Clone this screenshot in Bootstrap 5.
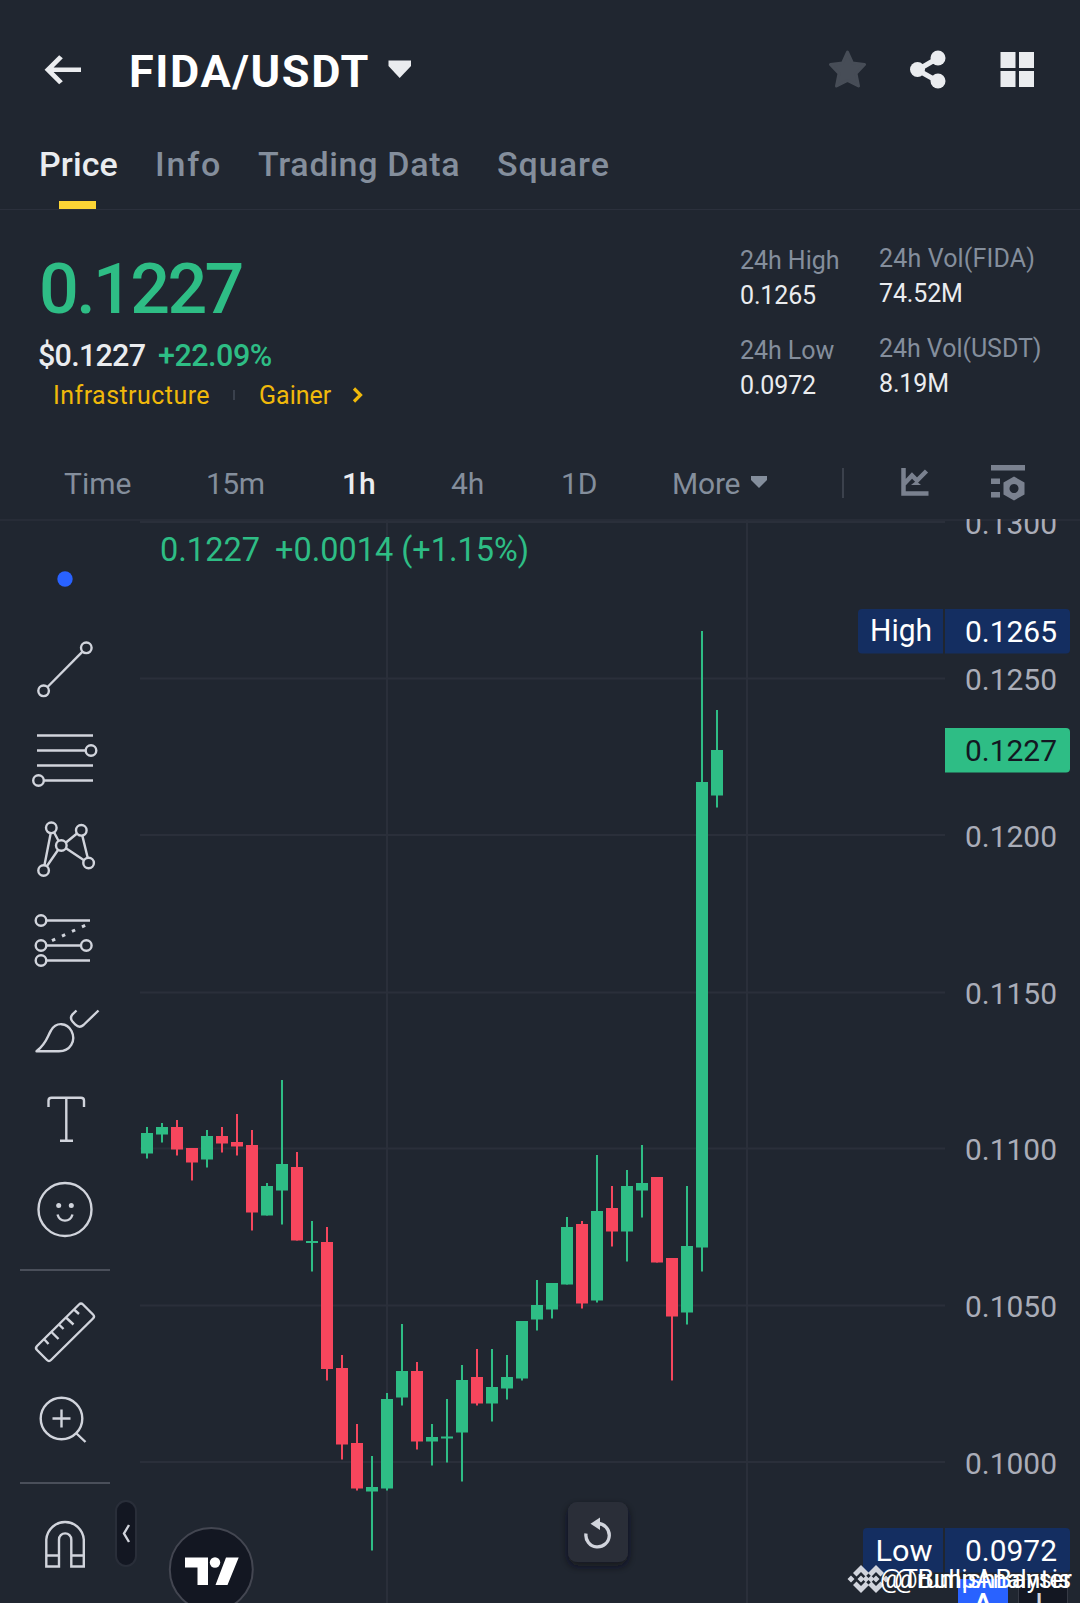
<!DOCTYPE html>
<html lang="en">
<head>
<meta charset="utf-8">
<meta name="viewport" content="width=device-width, initial-scale=1">
<title>FIDA/USDT</title>
<link href="https://cdn.jsdelivr.net/npm/bootstrap@5.3.0/dist/css/bootstrap.min.css" rel="stylesheet">
<style>
body{background:#202630;color:#eaecef;font-family:Roboto,"Liberation Sans",sans-serif;width:1080px;height:1603px;overflow:hidden;line-height:1}
svg{display:block;flex:none}
.topbar{height:140px;padding:0 45px 2px 44px}
.pair{font-size:45px;font-weight:700;color:#fff;letter-spacing:1.6px;width:239px;margin-left:47px;margin-top:5px;white-space:nowrap}
.tabbar{height:70px;padding-left:39px;border-bottom:1px solid #2b303c}
.tabbar .tab{font-size:34px;font-weight:500;letter-spacing:.7px;color:#848e9c;background:none;border:0;padding:0 0 22px;height:70px;text-align:left;white-space:nowrap;position:relative;display:block}
.tabbar .active{color:#eaecef;letter-spacing:.1px}
.tabbar .active::after{content:"";position:absolute;left:20px;bottom:1px;width:37px;height:8px;background:#fcd535}
.ticker{height:235px}
.up{color:#2ebd85}
.bigprice{font-size:70px;font-weight:500;letter-spacing:-2.6px;padding:44px 0 0 39px;height:121px}
.sub{font-size:30.5px;font-weight:500;padding-left:38px;height:50px;align-items:center;letter-spacing:-.75px}
.sub .up{letter-spacing:-.5px}
.tags{font-size:25px;color:#f0b90b;padding-left:53px;height:28px;align-items:center}
.stats{width:340px;font-size:25px;padding-top:36px}
.stats .c1{width:139px;padding-top:2px}
.stats dt{font-weight:400;color:#848e9c;height:35px;white-space:nowrap;letter-spacing:-.05px}
.stats dd{height:55px;margin:0;letter-spacing:-.15px}
.frames{height:74px;padding:1px 0 0 64px;font-size:30px;color:#848e9c}
.frames span{flex:none;white-space:nowrap;padding-top:3px}
.frames b{font-weight:500;color:#eaecef}
.tools{width:140px;padding-top:12.5px;position:relative;border-top:2px solid #272c37}
.tools hr{width:90px;margin:15.5px 0 15.5px 20px;border-top:2px solid #4a4f5a;opacity:1}
.tools svg{fill:none;stroke:#d1d4dc;stroke-width:2.4}
.fold{position:absolute;left:115px;top:979px;width:22px;height:67px;border:2px solid #292e39;background:#131722;border-radius:11px}
</style>
<script src="https://cdn.jsdelivr.net/npm/bootstrap@5.3.0/dist/js/bootstrap.bundle.min.js"></script>
</head>
<body class="d-flex flex-column">
<header class="topbar d-flex align-items-center flex-shrink-0">
  <svg width="38" height="34" viewBox="0 0 38 34" fill="none" stroke="#eaecef" stroke-width="5"><path d="M17 4 4 18 17 32M4 18H37" transform="translate(0 1) scale(1 .93)"/></svg>
  <div class="pair">FIDA/USDT</div>
  <svg class="ms-3" width="30" height="20" viewBox="0 0 30 20" fill="#eaecef"><path d="M4.500 1.500H27V7L15.700 19 4.500 7Z"/></svg>
  <div class="d-flex align-items-center ms-auto">
    <svg width="40" height="42" viewBox="0 0 40 42"><path d="M18.500 4 23.500 15 35.500 16.500 27 25.500 29.500 38 18.500 32.500 7.500 38 10 25.500 1.500 16.500 13.500 15Z" fill="#474d57" stroke="#474d57" stroke-width="3" stroke-linejoin="round"/></svg>
    <svg style="margin-left:40px" width="38" height="42" viewBox="0 0 38 42" fill="#eaecef"><path d="M29 10 8.500 22 29 33.500" fill="none" stroke="#eaecef" stroke-width="5"/><circle cx="29" cy="10" r="7.500"/><circle cx="8.500" cy="21.500" r="7.500"/><circle cx="29" cy="33" r="7.500"/></svg>
    <svg style="margin-left:53px" width="35" height="36" viewBox="0 0 35 36" fill="#eaecef"><path d="M.5 1h15v16H.5zM19 1h15v16H19zM.5 20h15v16H.5zM19 20h15v16H19z"/></svg>
  </div>
</header>
<nav class="tabbar d-flex flex-shrink-0">
  <button class="tab active" style="width:116px">Price</button>
  <button class="tab" style="width:103px;letter-spacing:1.8px">Info</button>
  <button class="tab" style="width:239px">Trading Data</button>
  <button class="tab" style="letter-spacing:1px">Square</button>
</nav>
<section class="ticker d-flex justify-content-between flex-shrink-0">
  <div>
    <div class="bigprice up">0.1227</div>
    <div class="sub d-flex"><span style="width:120px">$0.1227</span><span class="up">+22.09%</span></div>
    <div class="tags d-flex"><span style="width:180px;letter-spacing:.45px">Infrastructure</span><i style="width:2px;height:10px;background:#3a414d;margin-right:24px"></i><span style="width:92px">Gainer</span><svg width="14" height="16" viewBox="0 0 14 16" fill="none" stroke="#f0b90b" stroke-width="3.200"><path d="M3 1.500 9.500 8 3 14.500"/></svg></div>
  </div>
  <div class="stats d-flex">
    <dl class="c1 m-0"><dt>24h High</dt><dd>0.1265</dd><dt>24h Low</dt><dd>0.0972</dd></dl>
    <dl class="m-0"><dt style="letter-spacing:.15px">24h Vol(FIDA)</dt><dd>74.52M</dd><dt>24h Vol(USDT)</dt><dd>8.19M</dd></dl>
  </div>
</section>
<nav class="frames d-flex align-items-center flex-shrink-0">
  <span style="width:142px">Time</span><span style="width:136px;letter-spacing:-.5px">15m</span><span style="width:109px"><b>1h</b></span><span style="width:110px">4h</span><span style="width:111px">1D</span><span style="width:78px;letter-spacing:-.2px">More</span>
  <svg width="18" height="14" viewBox="0 0 18 14" fill="#848e9c"><path d="M1 0H17V4L9 12 1 4Z"/></svg>
  <i style="width:2px;height:30px;background:#3b414c;margin-left:74px"></i>
  <svg style="margin-left:56px" width="30" height="32" viewBox="0 0 30 32" fill="none" stroke="#7a818f" stroke-width="4.500"><path d="M3.500 1V26.500H28.500M4 17 12 8.500 17 13.500 26.500 4"/><path d="M16 14 21 18H11Z" fill="#7a818f" stroke="none"/></svg>
  <svg style="margin-left:60px" width="36" height="40" viewBox="0 0 36 40" fill="#7a818f"><path d="M1 2h34v5.500H1zM1 15.500h9V21H1zM1 29h9v5.500H1z"/><path fill-rule="evenodd" d="M24 13.500 34.500 19.500V31.500L24 37.500 13.500 31.500V19.500ZM24 21a4.500 4.500 0 1 0 .01 0Z"/></svg>
</nav>
<main class="d-flex flex-shrink-0">
  <aside class="tools">
    <svg width="130" height="90" viewBox="0 0 130 90"><circle cx="65" cy="45" r="7.700" fill="#2962ff" stroke="none"/></svg>
    <svg width="130" height="90" viewBox="0 0 130 90"><circle cx="86.300" cy="23.800" r="5.300"/><circle cx="43.600" cy="66.800" r="5.300"/><path d="M47.500 63 82.500 27.600"/></svg>
    <svg width="130" height="90" viewBox="0 0 130 90"><path d="M37 21.500H93M37 36.500H85.500M37 51.500H93M44 66.500H93"/><circle cx="91" cy="36.500" r="5.300"/><circle cx="38.500" cy="66.500" r="5.300"/></svg>
    <svg width="130" height="90" viewBox="0 0 130 90"><circle cx="51.300" cy="23.800" r="5.300"/><circle cx="81.300" cy="26.300" r="5.300"/><circle cx="61.300" cy="41.500" r="5.300"/><circle cx="43.600" cy="66.500" r="5.300"/><circle cx="88.600" cy="59" r="5.300"/><path d="M50.700 29.200 44.500 61M54 28.300 58.600 37M66 38.500 77 29.500M58 46 46.800 62.200M66 44.300 84 56.200M82.300 31.600 87.700 53.800"/></svg>
    <svg width="130" height="90" viewBox="0 0 130 90"><circle cx="41" cy="26.500" r="5.300"/><circle cx="41" cy="51.500" r="5.300"/><circle cx="86.300" cy="51.500" r="5.300"/><circle cx="41" cy="66.500" r="5.300"/><path d="M46 26.500H90M46 51.500H81M46 66.500H90"/><path d="M52 46.700 86 31" stroke-width="3" stroke-dasharray="3.500 7.500"/></svg>
    <svg width="130" height="90" viewBox="0 0 130 90" stroke-linejoin="round"><path d="M36.500 67.300C47 59 47 53 51 46.500 56 37.500 67 38.500 71.500 47 76.500 57 70 67.300 59 67.300Z"/><path d="M76.500 26.500 72.500 30.300Q69.500 34 72.500 37.500L75.500 40.700Q79.500 44.500 83.500 41L98.500 26.500"/></svg>
    <svg width="130" height="90" viewBox="0 0 130 90"><path d="M48.500 33V26.500Q48.500 23.800 51.500 23.800H81Q84 23.800 84 26.500V33M66.300 23.800V66.800M60 66.800H73"/></svg>
    <svg width="130" height="90" viewBox="0 0 130 90"><circle cx="65" cy="45.500" r="26.500"/><circle cx="58.700" cy="41.500" r="2.500" fill="#d1d4dc" stroke="none"/><circle cx="71.300" cy="41.500" r="2.500" fill="#d1d4dc" stroke="none"/><path d="M57.500 50.500C60 58.700 70 58.700 72.500 50.500"/></svg>
    <hr>
    <svg width="130" height="90" viewBox="0 0 130 90" stroke-linejoin="round"><path d="M37 59 79 17.500Q81 15.500 83 17.500L93 27.500Q95 29.500 93 31.500L51 73Q49 75 47 73L37 63Q35 61 37 59ZM44 52 48.500 57M51.500 45 58.500 52M59 37.500 63.500 42M66 30.500 73.500 37.500M74 22.500 79 27"/></svg>
    <svg width="130" height="90" viewBox="0 0 130 90"><circle cx="61.500" cy="41.500" r="20.800"/><path d="M52.500 41.500H70.500M61.500 32.500V50.500M76 56 85.500 65"/></svg>
    <hr>
    <svg width="130" height="90" viewBox="0 0 130 90"><path d="M46.300 66.500V39.500A18.800 18.800 0 0 1 83.800 39.500V66.500H71.300V39.500A6 6 0 0 0 59 39.500V66.500ZM46.300 55.500H59M71.300 55.500H83.800"/></svg>
    <div class="fold"><svg width="18" height="63" viewBox="0 0 18 63"><path d="M12 23 7 31.500 12 40"/></svg></div>
  </aside>
  <svg id="chart" width="940" height="1084" viewBox="140 519 940 1084" font-family="Roboto, 'Liberation Sans', sans-serif"></svg>
</main>
<script>
// direction, body top, body bottom, wick top, wick bottom (y in chart units)
const candles=[
['u',1133,1153.5,1127,1158.5],['u',1127,1134.5,1123,1142.5],['d',1127,1149.5,1120,1155.5],['d',1148,1162.5,1148,1180.5],
['u',1136,1159.5,1130,1167.5],['d',1136,1143.5,1127,1152.5],['d',1142,1146.5,1114,1155.5],['d',1145,1212.5,1130,1230.5],
['u',1186,1215.5,1183,1215.5],['u',1164,1190.5,1080,1224.5],['d',1167,1240.5,1152,1240.5],['u',1241,1243,1221,1271.5],
['d',1242,1369,1227,1380.5],['d',1368,1444.5,1355,1459.5],['d',1443,1488.5,1424,1490.5],['u',1487,1491.5,1456,1550.5],
['u',1399,1488.5,1393,1490.5],['u',1371,1397.5,1324,1405.5],['d',1371,1441.5,1362,1449.5],['u',1437,1441.5,1424,1465.5],
['u',1436.5,1438.5,1399,1462.5],['u',1380,1432.5,1365,1481.5],['d',1377,1403.5,1349,1405.5],['u',1387,1403.5,1349,1421.5],
['u',1377,1388.5,1355,1399.5],['u',1321,1378.5,1321,1380.5],['u',1305,1319.5,1280,1330.5],['u',1283,1309.5,1283,1318.5],
['u',1227,1284.5,1217,1284.5],['d',1224,1303.5,1221,1308.5],['u',1211,1300.5,1155,1302.5],['d',1208,1231.5,1186,1246.5],
['u',1186,1231.5,1170,1261.5],['u',1183,1190.5,1145,1217.5],['d',1177,1262.5,1177,1262.5],['d',1258,1316.5,1258,1380.5],
['u',1246,1312.5,1186,1324.5],['u',782,1247.5,631,1271.5],['u',750,795.5,710,807.5]];
let s='';
const box=(x,y,w,h,f,e='')=>{s+=`<rect x="${x}" y="${y}" width="${w}" height="${h}" fill="${f}" ${e}/>`};
const label=(x,y,t,f,w,size=30,e='')=>{s+=`<text x="${x}" y="${y}" fill="${f}" font-size="${size}" textLength="${w}" lengthAdjust="spacingAndGlyphs" xml:space="preserve" ${e}>${t}</text>`};
// grid and price axis
box(140,519,940,2,'#272c37');
const grid=[522,678.5,835,992.5,1148.5,1305.5,1462];
grid.forEach((y,i)=>{box(140,y-1,805,2,'#2a2f3a');label(965,y+11.5,(0.13-i*0.005).toFixed(4),'#aaadb8',92)});
box(386,520,2,1083,'#2a2f3a');box(746,520,2,1083,'#2a2f3a');
candles.forEach(([d,a,b,h,l],i)=>{const x=147+15*i,f=d=='u'?'#2ebd85':'#f6465d';box(x-1,h,2,l-h,f);box(x-6,a,12,b-a,f)});
label(160,561,'0.1227','#2ebd85',100,33);
label(275,561,'+0.0014 (+1.15%)','#2ebd85',254,33);
// price tags
const tag=(x,y,f)=>{s+=`<path d="M${x+4} ${y}H943V${y+44.5}H${x+4}Q${x} ${y+44.5} ${x} ${y+40.5}V${y+4}Q${x} ${y} ${x+4} ${y}Z" fill="${f}"/>`};
const val=(y,f)=>{s+=`<path d="M945 ${y}H1066Q1070 ${y} 1070 ${y+4}V${y+40.5}Q1070 ${y+44.5} 1066 ${y+44.5}H945Z" fill="${f}"/>`};
tag(858,609,'#142e61');val(609,'#142e61');label(870,640.5,'High','#fff',62,31);label(965,642,'0.1265','#fff',92);
val(728,'#2ebd85');label(965,761,'0.1227','#131722',92);
tag(863,1528,'#142e61');val(1528,'#142e61');label(875.5,1561,'Low','#fff',57);label(965,1561,'0.0972','#fff',92);
// logo badge
s+='<circle cx="211.300" cy="1569.500" r="41.500" fill="#131722" stroke="#434651" stroke-width="2"/><path d="M185 1557.500H208V1585H197.500V1567.500H185ZM226 1557.500H238.700L227.500 1585H215.500Z" fill="#fff"/><circle cx="215" cy="1562.500" r="5.200" fill="#fff"/>';
// reset button
s+='<defs><filter id="sh" x="-40%" y="-40%" width="180%" height="180%"><feDropShadow dx="0" dy="4" stdDeviation="4" flood-color="#10131b" flood-opacity=".75"/></filter></defs>';
box(568,1502,60,60,'#2a2e39','rx="9" filter="url(#sh)"');
s+='<path d="M586 1533.500A11.700 11.700 0 1 0 597.500 1523.500" fill="none" stroke="#d1d4dc" stroke-width="3.300"/><path d="M600 1517.500V1530L590.500 1523.700Z" fill="#d1d4dc"/>';
// scale mode buttons
box(958,1579,50,30,'#2962ff');box(1018.5,1579.5,49,30,'#131722','stroke="#363a45"');
label(973,1614,'A','#fff',20,30,'font-weight="500"');label(1035,1614,'L','#d1d4dc',17);
// author marks
const mark=x=>{s+=`<g transform="translate(${x} 1579)" fill="#d1d4dc"><path d="M0-14 8-6 4.500-2.500 0-7-4.500-2.500-8-6ZM0 14 8 6 4.500 2.500 0 7-4.500 2.500-8 6ZM0-3.500 3.500 0 0 3.500-3.500 0ZM-10-3.500-6.500 0-10 3.500-13.500 0ZM10-3.500 13.500 0 10 3.500 6.500 0Z"/></g>`};
mark(861);mark(876);
label(880,1587.500,'@TrumpAnalysis','#fff',191,25);
label(894,1587.500,'@BullishBanter','#fff',178,25);
document.getElementById('chart').innerHTML=s;
</script>
</body>
</html>
